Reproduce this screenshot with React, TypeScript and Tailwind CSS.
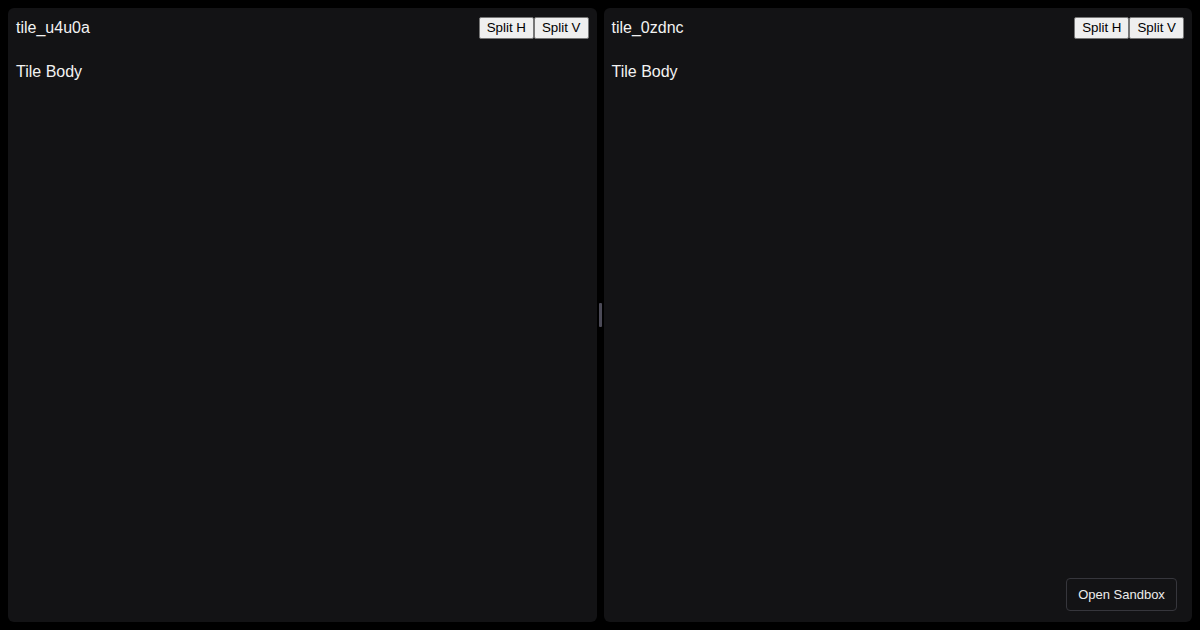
const font = { fontFamily: '"Liberation Sans", Arial, sans-serif' };

function Tile({ id, children }: { id: string; children?: React.ReactNode }) {
  return (
    <div className="relative flex min-w-0 flex-1 flex-col rounded-md bg-[#131315]">
      <div className="flex items-center justify-between p-2">
        <span className="text-base leading-6 text-[#f2f2f2]">{id}</span>
        <div className="flex">
          <button
            type="button"
            className="h-[22px] rounded-[2px] border border-[#767676] bg-[#efefef] px-[7px] text-[13.33px] leading-none text-black"
          >
            Split H
          </button>
          <button
            type="button"
            className="h-[22px] rounded-[2px] border border-[#767676] bg-[#efefef] px-[7px] text-[13.33px] leading-none text-black"
          >
            Split V
          </button>
        </div>
      </div>
      <div className="px-2 pt-[12px] text-base leading-6 text-[#f2f2f2]">Tile Body</div>
      {children}
    </div>
  );
}

export default function App() {
  return (
    <div className="flex h-[630px] w-full bg-black p-2" style={font}>
      <Tile id="tile_u4u0a" />
      <div className="flex w-[7px] shrink-0 items-center justify-center">
        <div className="h-6 w-[3px] rounded-[1px] bg-[#4b4a57]" />
      </div>
      <Tile id="tile_0zdnc">
        {/* floating action over the tile body */}
        <button
          type="button"
          className="absolute right-[15px] bottom-[11px] h-[33px] w-[111px] rounded border border-[#36363c] bg-[#131315] text-[13px] text-[#ececec]"
        >
          Open Sandbox
        </button>
      </Tile>
    </div>
  );
}
